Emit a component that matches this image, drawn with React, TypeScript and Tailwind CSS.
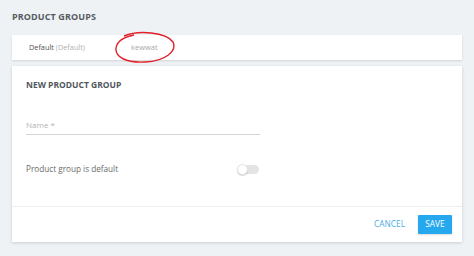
import React from "react";

export default function App() {
  return (
    <div
      className="w-[474px] h-[256px] bg-[#eff2f5] px-3 pt-[11px] overflow-hidden relative"
      style={{ fontFamily: '"Open Sans", "Liberation Sans", sans-serif' }}
    >
      <div className="text-[9px] leading-[12px] font-bold text-[#555b61] tracking-[0.1px]">PRODUCT GROUPS</div>

      <div className="mt-[12px] h-[25px] bg-white flex items-center pl-[17px] shadow-[0_1px_2px_rgba(0,0,0,0.12)] relative">
        <div className="w-[102px] flex items-center">
          <span className="text-[7.3px] text-[#505050]">Default</span>
          <span className="text-[7.3px] text-[#b0b0b0] ml-[2px]">(Default)</span>
        </div>
        <span className="text-[7.5px] text-[#a8a8a8]">kewwat</span>
        <svg className="absolute left-[102px] top-[-4px]" width="62" height="34" viewBox="0 0 62 34">
          <path
            d="M10 5 C 24 -1, 52 1, 59 11 C 63 20, 52 30, 31 31 C 12 32, 1 26, 2 17 C 3 10, 10 6, 20 4"
            fill="none"
            stroke="#e0202a"
            strokeWidth="1.4"
          />
        </svg>
      </div>

      <div className="mt-[6px] h-[176px] bg-white shadow-[0_1px_3px_rgba(0,0,0,0.15)] flex flex-col">
        <div className="px-[14px] pt-[13px] flex-1">
          <div className="text-[8.5px] leading-[12px] font-bold text-[#50565c]">NEW PRODUCT GROUP</div>
          <div className="mt-[28px] w-[234px] border-b border-[#d4d4d4] pb-[3px]">
            <div className="text-[8px] leading-[12px] text-[#b3b3b3]">Name *</div>
          </div>
          <div className="mt-[28px] flex items-center">
            <div className="w-[211px] text-[8.2px] leading-[12px] text-[#6a6a6a]">Product group is default</div>
            <div className="relative w-[22px] h-[12px] flex items-center">
              <div className="w-[21px] h-[9px] rounded-full bg-[#e3e4e6] ml-[1px]"></div>
              <div className="absolute left-0 top-[0.5px] w-[11px] h-[11px] rounded-full bg-white border border-[#e2e2e2] shadow-[0_1px_1px_rgba(0,0,0,0.15)]"></div>
            </div>
          </div>
        </div>
        <div className="h-[36px] border-t border-[#eceef0] flex items-center justify-end pr-[10px]">
          <span className="text-[8.3px] text-[#4aaee6] mr-[13px]">CANCEL</span>
          <div className="w-[34px] h-[19px] bg-[#26a8ef] rounded-[1px] flex items-center justify-center text-[8.3px] text-white shadow-[0_1px_2px_rgba(0,0,0,0.15)]">
            SAVE
          </div>
        </div>
      </div>
    </div>
  );
}
